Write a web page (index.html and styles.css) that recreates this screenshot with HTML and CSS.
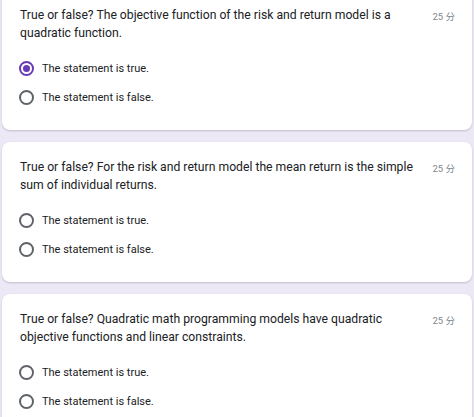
FILE: index.html
```html
<!DOCTYPE html>
<html lang="en">
<head>
    <meta charset="UTF-8">
    <meta name="viewport" content="width=device-width, initial-scale=1.0">
    <title>Quiz</title>
    <link rel="stylesheet" href="styles.css">
</head>
<body>
    <div class="form">
        <div class="card">
            <div class="question">
                <div class="title">True or false? The objective function of the risk and return model is a quadratic function.</div>
                <div class="points">25 分</div>
            </div>
            <div class="options">
                <label class="option"><span class="radio checked"></span>The statement is true.</label>
                <label class="option"><span class="radio"></span>The statement is false.</label>
            </div>
        </div>
        <div class="card">
            <div class="question">
                <div class="title">True or false? For the risk and return model the mean return is the simple sum of individual returns.</div>
                <div class="points">25 分</div>
            </div>
            <div class="options">
                <label class="option"><span class="radio"></span>The statement is true.</label>
                <label class="option"><span class="radio"></span>The statement is false.</label>
            </div>
        </div>
        <div class="card">
            <div class="question">
                <div class="title">True or false? Quadratic math programming models have quadratic objective functions and linear constraints.</div>
                <div class="points">25 分</div>
            </div>
            <div class="options">
                <label class="option"><span class="radio"></span>The statement is true.</label>
                <label class="option"><span class="radio"></span>The statement is false.</label>
            </div>
        </div>
    </div>
</body>
</html>
```
FILE: styles.css
```css
* {
    box-sizing: border-box;
    margin: 0;
    padding: 0;
}
body {
    background-color: #ede8f6;
    font-family: Roboto, "Noto Sans CJK SC", sans-serif;
    color: #202124;
    overflow: hidden;
}
.form {
    display: flex;
    flex-direction: column;
    gap: 12px;
    margin-top: -10px;
    padding: 0 2px;
}
.card {
    background-color: white;
    border-radius: 8px;
    box-shadow: 0 1px 2px rgba(60, 64, 67, 0.25);
    height: 140px;
    padding: 16px 17px 0 18px;
}
.question {
    display: flex;
    gap: 8px;
}
.title {
    flex: 1;
    font-size: 12.2px;
    line-height: 18px;
}
.points {
    flex: 0 0 21px;
    font-size: 9.5px;
    color: #80868b;
    padding-top: 3px;
    white-space: nowrap;
}
.options {
    display: flex;
    flex-direction: column;
    gap: 11px;
    margin-top: 17px;
}
.option {
    display: flex;
    align-items: center;
    gap: 8px;
    font-size: 11px;
    height: 18px;
}
.radio {
    width: 15px;
    height: 15px;
    border: 2px solid #5f6368;
    border-radius: 50%;
    display: flex;
    align-items: center;
    justify-content: center;
    margin-left: -1px;
}
.radio.checked {
    border-color: #673ab7;
}
.radio.checked::after {
    content: "";
    width: 7px;
    height: 7px;
    border-radius: 50%;
    background-color: #673ab7;
}
```
